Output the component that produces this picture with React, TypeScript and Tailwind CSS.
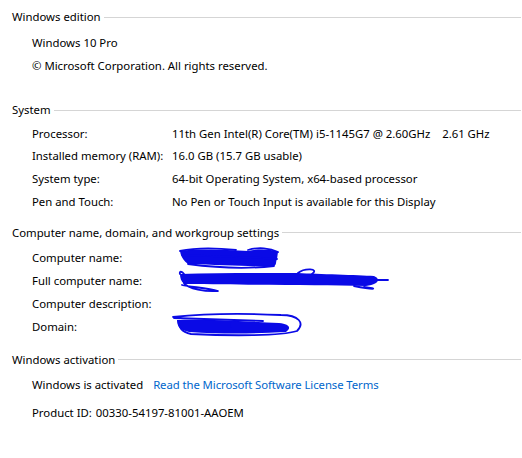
const Header = ({ title, className = '' }: { title: string; className?: string }) => (
  <div className={`flex h-[20px] items-center pl-3 ${className}`}>
    <span className="whitespace-nowrap text-black">{title}</span>
    <span className="ml-[3px] mr-px h-px flex-1 bg-[#d5d5d5]" />
  </div>
)

const Row = ({ label, value, children, tight }: { label: string; value?: string; children?: React.ReactNode; tight?: boolean }) => (
  <div className={`relative flex items-center pl-8 ${tight ? 'h-[22.7px]' : 'h-[23px]'}`}>
    <span className="w-[140px] shrink-0 whitespace-nowrap">{label}</span>
    <span className="whitespace-pre">{value}</span>
    {children}
  </div>
)

const Scribble = ({ w, h, fill, d, className }: { w: number; h: number; fill: string; d: string; className: string }) => (
  <svg width={w} height={h} viewBox={`0 0 ${w} ${h}`} className={`absolute ${className}`}>
    <path d={fill} fill="#0a0ae6" />
    <path d={d} fill="none" stroke="#0a0ae6" strokeWidth="1.8" strokeLinecap="round" strokeLinejoin="round" />
  </svg>
)

export default function App() {
  return (
    <div className="h-[458px] w-[522px] bg-white text-[11.35px] leading-none text-black" style={{ fontFamily: '"Noto Sans", "Open Sans", sans-serif' }}>
      <div className="pt-[7px]">
        <Header title="Windows edition" />
        <div className="mt-1">
          <Row label="Windows 10 Pro" />
          <Row label="© Microsoft Corporation. All rights reserved." />
        </div>

        <Header title="System" className="mt-[23px]" />
        <div className="mt-[2px]">
          <Row tight label="Processor:" value="11th Gen Intel(R) Core(TM) i5-1145G7 @ 2.60GHz    2.61 GHz" />
          <Row tight label="Installed memory (RAM):" value="16.0 GB (15.7 GB usable)" />
          <Row tight label="System type:" value="64-bit Operating System, x64-based processor" />
          <Row tight label="Pen and Touch:" value="No Pen or Touch Input is available for this Display" />
        </div>

        <Header title="Computer name, domain, and workgroup settings" className="mt-[10px]" />
        <div className="mt-[3px]">
          <Row label="Computer name:">
            <Scribble
              w={104}
              h={22}
              className="left-[178px] top-[1px]"
              fill="M2 4 C20 1 50 3 70 4 C80 2 92 2 100 5 L99 12 C97 16 100 19 92 20 C70 19 40 18 10 17 C5 13 3 10 2 4 Z"
              d="M2 4 C20 0 40 1 58 3 M70 3 C80 0 92 1 100 5 M4 8 C30 9 70 10 99 12 M10 17 C40 21 70 22 96 19"
            />
          </Row>
          <Row label="Full computer name:">
            <Scribble
              w={212}
              h={28}
              className="left-[178px] top-[-1px]"
              fill="M2 6 C40 5 80 5 120 5 C140 6 180 7 196 8 C203 11 201 16 188 18 C140 17 90 17 6 16 C3 13 2 10 2 6 Z"
              d="M120 5 C126 0 142 0 134 6 M196 12 L210 12 M6 15 C10 21 28 24 40 23 C30 20 12 19 4 17 M176 18 C196 22 202 21 186 19 M2 6 C1 3 4 3 6 6"
            />
          </Row>
          <Row label="Computer description:" />
          <Row label="Domain:">
            <Scribble
              w={134}
              h={28}
              className="left-[171px] top-[-4px]"
              fill="M6 9 C30 8 70 10 108 12 C119 13 121 18 114 21 C80 23 50 23 18 21 C8 19 6 14 6 9 Z"
              d="M2 6 C30 3 70 2 110 4 C128 4 134 12 126 20 C110 25 60 25 20 23 C10 21 7 15 8 10 M3 7 C30 8 60 9 92 10 M60 11 L60 16"
            />
          </Row>
        </div>

        <Header title="Windows activation" className="mt-[12px]" />
        <div className="mt-[3px] flex h-[23px] items-center pl-8">
          <span className="whitespace-nowrap">Windows is activated</span>
          <span className="ml-[10px] whitespace-nowrap tracking-[-0.08px] text-[#0066cc]">Read the Microsoft Software License Terms</span>
        </div>
        <div className="mt-[5px] flex h-[23px] items-center pl-8">
          <span className="whitespace-nowrap">Product ID:</span>
          <span className="ml-[4px] whitespace-nowrap">00330-54197-81001-AAOEM</span>
        </div>
      </div>
    </div>
  )
}
